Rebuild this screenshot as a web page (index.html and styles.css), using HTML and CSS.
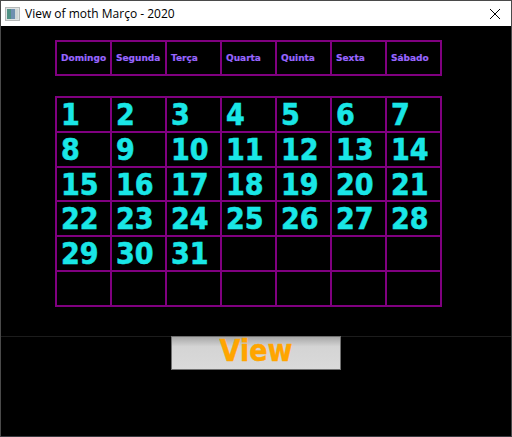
FILE: index.html
```html
<!DOCTYPE html>
<html lang="pt-BR">
<head>
  <meta charset="UTF-8">
  <meta name="viewport" content="width=device-width, initial-scale=1">
  <title>View of moth Março - 2020</title>
  <link rel="stylesheet" href="styles.css">
</head>
<body>
  <div class="window">
    <div class="titlebar">
      <svg class="app-icon" width="16" height="16" viewBox="0 0 16 16">
        <rect x="0.5" y="1.5" width="14" height="13" fill="#dfe3e3" stroke="#b4b8b8"/>
        <rect x="2" y="3" width="4" height="10" fill="#4f9184"/>
        <rect x="6" y="3" width="4" height="10" fill="#6f8fb0"/>
        <rect x="10" y="3" width="3" height="10" fill="#cfd6d6"/>
      </svg>
      <span class="title">View of moth Março - 2020</span>
      <svg class="close" width="12" height="12" viewBox="0 0 12 12">
        <path d="M1 1 L11 11 M11 1 L1 11" stroke="#000" stroke-width="1" fill="none"/>
      </svg>
    </div>

    <div class="content">
      <div class="calendar">
        <div class="grid weekdays">
          <div>Domingo</div><div>Segunda</div><div>Terça</div><div>Quarta</div><div>Quinta</div><div>Sexta</div><div>Sábado</div>
        </div>
        <div class="grid days">
          <div>1</div><div>2</div><div>3</div><div>4</div><div>5</div><div>6</div><div>7</div>
          <div>8</div><div>9</div><div>10</div><div>11</div><div>12</div><div>13</div><div>14</div>
          <div>15</div><div>16</div><div>17</div><div>18</div><div>19</div><div>20</div><div>21</div>
          <div>22</div><div>23</div><div>24</div><div>25</div><div>26</div><div>27</div><div>28</div>
          <div>29</div><div>30</div><div>31</div><div></div><div></div><div></div><div></div>
          <div></div><div></div><div></div><div></div><div></div><div></div><div></div>
        </div>
      </div>
      <div class="footer">
        <button class="view-btn">View</button>
      </div>
    </div>
  </div>
</body>
</html>
```

FILE: styles.css
```css
html, body {
  margin: 0;
  height: 100%;
}
body {
  background: #000;
}
.window {
  height: 437px;
  box-sizing: border-box;
  border: 1px solid #4a4a4a;
  border-bottom-color: #3a3a40;
  display: flex;
  flex-direction: column;
}
.titlebar {
  height: 25px;
  background: #fff;
  display: flex;
  align-items: center;
  padding: 0 10px 0 4px;
  flex-shrink: 0;
}
.title {
  font-family: "Open Sans", "Noto Sans", sans-serif;
  font-size: 12px;
  color: #000;
  margin-left: 4px;
  flex: 1;
}
.content {
  flex: 1;
  display: flex;
  flex-direction: column;
  background: #000;
}
.calendar {
  height: 310px;
  box-sizing: border-box;
  padding: 14px 0 0 54px;
}
.grid {
  display: grid;
  grid-template-columns: repeat(7, 53px);
  gap: 2px;
  width: 387px;
  padding: 2px;
  box-sizing: border-box;
  background: #800080;
}
.grid > div {
  background: #000;
}
.weekdays {
  grid-auto-rows: 32px;
}
.weekdays > div {
  font-family: "DejaVu Sans", sans-serif;
  font-weight: bold;
  font-size: 9px;
  -webkit-text-stroke: 0.2px #9966ff;
  color: #9966ff;
  display: flex;
  align-items: center;
  padding-left: 4px;
}
.days {
  margin-top: 20px;
  grid-template-rows: repeat(6, 32.8px);
}
.days > div {
  font-family: "DejaVu Sans", sans-serif;
  font-stretch: condensed;
  font-weight: bold;
  font-size: 30px;
  line-height: 30px;
  -webkit-text-stroke: 0.5px #19e6e6;
  color: #19e6e6;
  padding: 2px 0 0 4px;
  box-sizing: border-box;
}
.footer {
  flex: 1;
  border-top: 1px solid #1c1c1c;
  display: flex;
  justify-content: center;
  align-items: flex-start;
}
.view-btn {
  width: 170px;
  height: 34px;
  margin-top: -1px;
  padding: 0 0 4px;
  border: 1px solid #707070;
  background: linear-gradient(#a8a8a8, #d4d4d4 30%, #dadada);
  font-family: "DejaVu Sans", sans-serif;
  font-stretch: condensed;
  font-weight: bold;
  font-size: 30px;
  line-height: 28px;
  -webkit-text-stroke: 0.4px #ffa500;
  color: #ffa500;
}
```
